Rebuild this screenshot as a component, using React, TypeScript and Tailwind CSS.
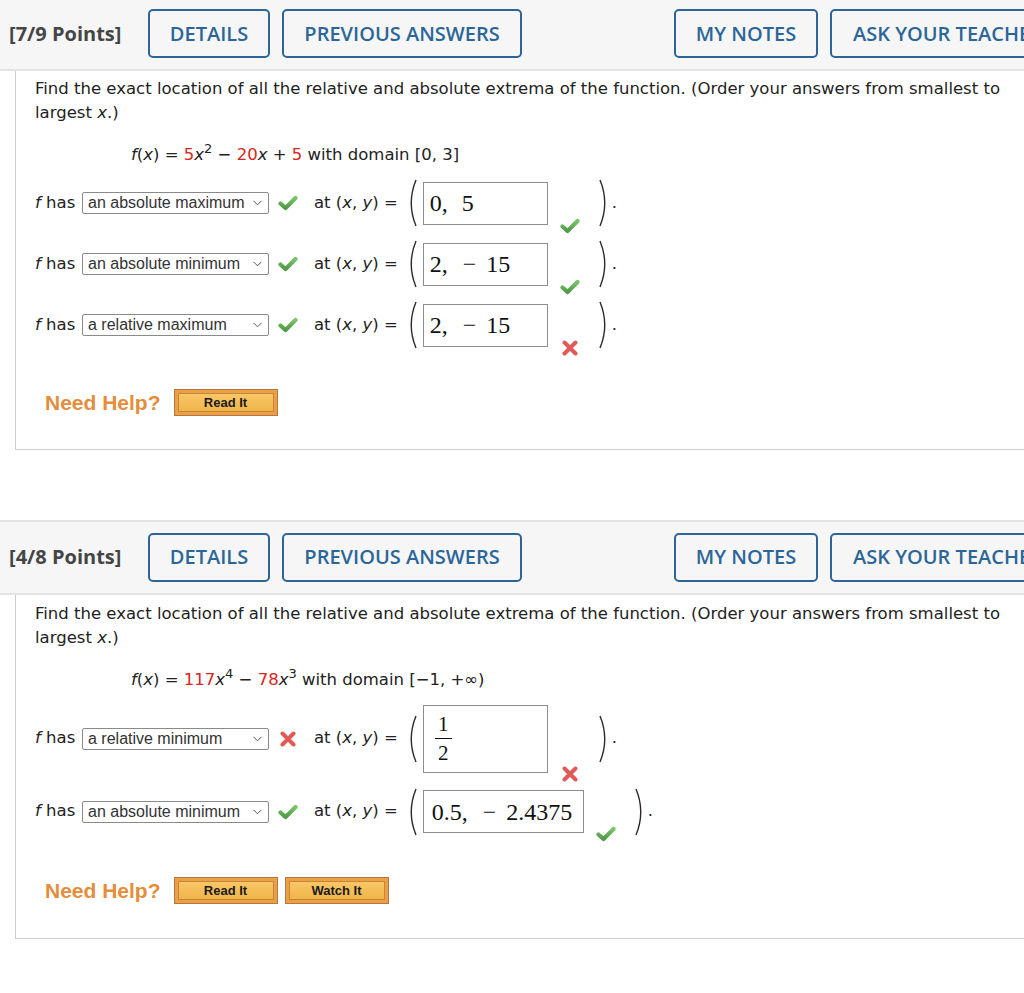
import React from 'react';

const verdana = "font-['DejaVu_Sans',Verdana,sans-serif]";
const red = 'text-[#d8261c]';

function Check() {
  return (
    <svg width="20" height="16" viewBox="0 0 20 16">
      <defs>
        <linearGradient id="chk" x1="0" y1="0" x2="0" y2="1">
          <stop offset="0" stopColor="#7cc46a" />
          <stop offset="1" stopColor="#4e9a45" />
        </linearGradient>
      </defs>
      <path d="M2.5 8.5 L7.5 13 L17.5 3" fill="none" stroke="url(#chk)" strokeWidth="4.2" strokeLinecap="round" strokeLinejoin="round" />
    </svg>
  );
}

function Cross() {
  return (
    <svg width="18" height="16" viewBox="0 0 18 16">
      <path d="M3.5 2.5 L14.5 13.5 M14.5 2.5 L3.5 13.5" fill="none" stroke="#e05a58" strokeWidth="4" strokeLinecap="round" />
    </svg>
  );
}

function Paren({ right }: { right?: boolean }) {
  return (
    <svg width="12" height="48" viewBox="0 0 12 48" className="shrink-0">
      <path
        d={right ? 'M2 1 Q11.5 24 2 47' : 'M10 1 Q0.5 24 10 47'}
        fill="none"
        stroke="#2a2a2a"
        strokeWidth="1.4"
      />
    </svg>
  );
}

function Header({ points }: { points: string }) {
  const btn =
    "shrink-0 h-[49px] border-2 border-[#2c6698] rounded-[5px] px-[21px] flex items-center text-[20px] font-semibold text-[#2c6698] bg-[#f6f6f6] font-['Open_Sans',sans-serif] whitespace-nowrap";
  return (
    <div className="bg-[#f6f6f6] border-y-2 border-[#e3e3e3] h-[75px] flex items-center whitespace-nowrap">
      <div className="shrink-0 pl-[9px] w-[148px] text-[20px] font-bold text-[#454545] font-['Open_Sans',sans-serif]">
        [{points} Points]
      </div>
      <div className="shrink-0 flex gap-[12px]">
        <div className={btn + ' w-[122px] justify-center'}>DETAILS</div>
        <div className={btn + ' w-[240px] justify-center'}>PREVIOUS ANSWERS</div>
      </div>
      <div className="shrink-0 flex gap-[12px] ml-[152px]">
        <div className={btn + ' w-[144px] justify-center'}>MY NOTES</div>
        <div className={btn}>ASK YOUR TEACHER</div>
      </div>
    </div>
  );
}

function Select({ text }: { text: string }) {
  return (
    <div className="shrink-0 w-[187px] h-[22px] border border-[#8a8a8a] rounded-[2px] bg-white flex items-center justify-between pl-[5px] pr-[6px] font-['Liberation_Sans',Arial,sans-serif] text-[16px] text-[#333] leading-none">
      <span>{text}</span>
      <svg width="9" height="6" viewBox="0 0 9 6">
        <path d="M0.5 0.8 L4.5 4.8 L8.5 0.8" fill="none" stroke="#555" strokeWidth="1" />
      </svg>
    </div>
  );
}

// math value like "2,  − 15" with KaTeX-like spacing
function MathVal({ a, b, neg }: { a: string; b: string; neg?: boolean }) {
  return (
    <span className="flex items-baseline">
      <span>{a},</span>
      {neg ? (
        <>
          <span className="ml-[15px]">−</span>
          <span className="ml-[10px]">{b}</span>
        </>
      ) : (
        <span className="ml-[14px]">{b}</span>
      )}
    </span>
  );
}

function Row({
  choice,
  choiceOk,
  answerOk,
  inputW,
  inputH,
  children,
}: {
  choice: string;
  choiceOk: boolean;
  answerOk: boolean;
  inputW: number;
  inputH: number;
  children: React.ReactNode;
}) {
  return (
    <div className={'flex items-center text-[16.5px] text-[#222] whitespace-nowrap ' + verdana}>
      <span className="w-[47px] shrink-0">
        <i>f</i> has
      </span>
      <Select text={choice} />
      <span className="ml-[9px] w-[20px] flex justify-center">{choiceOk ? <Check /> : <Cross />}</span>
      <span className="ml-[16px]">
        at (<i>x</i>, <i>y</i>) =
      </span>
      <span className="ml-[8px]">
        <Paren />
      </span>
      <div className="ml-[5px] flex items-end">
        <div
          className="border border-[#8d8d8d] bg-white flex items-center pl-[6px] font-['Liberation_Serif','Times_New_Roman',serif] text-[24px] text-[#111]"
          style={{ width: inputW, height: inputH }}
        >
          {children}
        </div>
        <span className="ml-[12px] mb-[-9px] w-[20px] flex justify-center">{answerOk ? <Check /> : <Cross />}</span>
      </div>
      <span className="ml-[18px]">
        <Paren right />
      </span>
      <span className="ml-[2px] text-[#222]">.</span>
    </div>
  );
}

function HelpButton({ label }: { label: string }) {
  return (
    <div className="w-[104px] h-[27px] border border-[#b7773a] bg-[#e9a048] p-[3px]">
      <div className="h-full border border-[#c98536] bg-gradient-to-b from-[#f8c766] to-[#f1b54c] flex items-center justify-center font-['Liberation_Sans',Arial,sans-serif] font-bold text-[13px] text-[#1a1a1a] leading-none">
        {label}
      </div>
    </div>
  );
}

function NeedHelp({ watch }: { watch?: boolean }) {
  return (
    <div className="flex items-center pl-[10px]">
      <span className="font-['Liberation_Sans',Arial,sans-serif] font-bold text-[21px] text-[#e48d3a] mr-[13px]">
        Need Help?
      </span>
      <HelpButton label="Read It" />
      {watch && (
        <div className="ml-[7px]">
          <HelpButton label="Watch It" />
        </div>
      )}
    </div>
  );
}

function Question() {
  return (
    <p className={'text-[16.5px] leading-[24px] text-[#222] pr-[10px] ' + verdana}>
      Find the exact location of all the relative and absolute extrema of the function. (Order your answers from
      smallest to largest <i>x</i>.)
    </p>
  );
}

function Sup({ n }: { n: string }) {
  return <sup className="text-[13px] -top-[7px]">{n}</sup>;
}

export default function App() {
  return (
    <div className="w-[1024px] h-[993px] overflow-hidden bg-white">
      <div className="-mt-[4px]">
        {/* first question */}
        <Header points="7/9" />
        <div className="ml-[15px] border-l border-b border-[#cdcdcd] pl-[19px] pt-[6px] pb-[30px]">
          <Question />
          <div className={'mt-[18px] pl-[96px] text-[16.5px] leading-[24px] text-[#222] ' + verdana}>
            <i>f</i>(<i>x</i>) = <span className={red}>5</span>
            <i>x</i>
            <Sup n="2" /> − <span className={red}>20</span>
            <i>x</i> + <span className={red}>5</span> with domain [0, 3]
          </div>
          <div className="mt-[12px] flex flex-col gap-[13px]">
            <Row choice="an absolute maximum" choiceOk answerOk inputW={125} inputH={43}>
              <MathVal a="0" b="5" />
            </Row>
            <Row choice="an absolute minimum" choiceOk answerOk inputW={125} inputH={43}>
              <MathVal a="2" b="15" neg />
            </Row>
            <Row choice="a relative maximum" choiceOk answerOk={false} inputW={125} inputH={43}>
              <MathVal a="2" b="15" neg />
            </Row>
          </div>
          <div className="mt-[38px]">
            <NeedHelp />
          </div>
        </div>

        <div className="h-[70px]" />

        {/* second question */}
        <Header points="4/8" />
        <div className="ml-[15px] border-l border-b border-[#cdcdcd] pl-[19px] pt-[7px] pb-[32px]">
          <Question />
          <div className={'mt-[18px] pl-[96px] text-[16.5px] leading-[24px] text-[#222] ' + verdana}>
            <i>f</i>(<i>x</i>) = <span className={red}>117</span>
            <i>x</i>
            <Sup n="4" /> − <span className={red}>78</span>
            <i>x</i>
            <Sup n="3" /> with domain [−1, +∞)
          </div>
          <div className="mt-[13px] flex flex-col gap-[15px]">
            <Row choice="a relative minimum" choiceOk={false} answerOk={false} inputW={125} inputH={68}>
              <span className="ml-[5px] inline-flex flex-col items-center text-[21px] leading-none">
                <span className="px-[2px] pb-[3px]">1</span>
                <span className="h-[1px] w-[17px] bg-[#111]" />
                <span className="px-[2px] pt-[4px]">2</span>
              </span>
            </Row>
            <Row choice="an absolute minimum" choiceOk answerOk inputW={161} inputH={43}>
              <span className="ml-[2px]">
                <MathVal a="0.5" b="2.4375" neg />
              </span>
            </Row>
          </div>
          <div className="mt-[39px]">
            <NeedHelp watch />
          </div>
        </div>
      </div>
    </div>
  );
}
